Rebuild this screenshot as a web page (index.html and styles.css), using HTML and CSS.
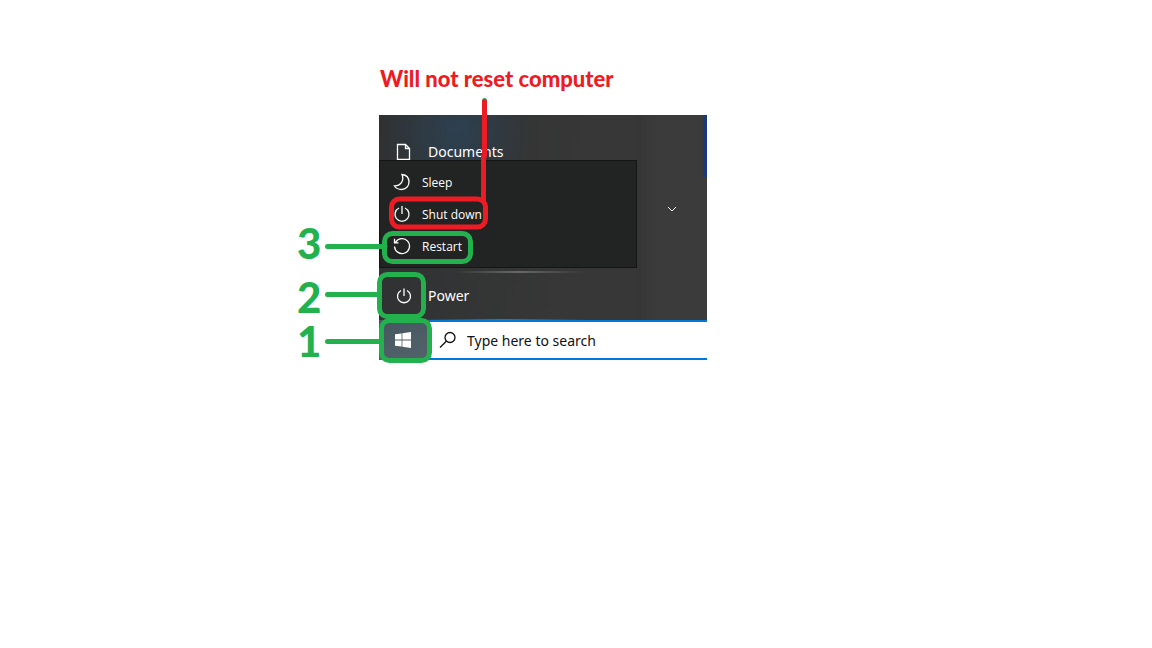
FILE: index.html
```html
<!DOCTYPE html>
<html lang="en">

<head>
    <meta charset="UTF-8">
    <meta name="viewport" content="width=device-width, initial-scale=1.0">
    <title>Restart the computer</title>
    <link rel="stylesheet" href="styles.css">
</head>

<body>
    <main class="guide">
        <h1 class="warning">Will not reset computer</h1>

        <div class="figure">
            <div class="steps">
                <div class="step step-last">3</div>
                <div class="step">2</div>
                <div class="step">1</div>
            </div>

            <div class="screen">
                <div class="start-menu">
                    <div class="menu-left">
                        <button type="button" class="nav-item documents">
                            <svg class="icon" viewBox="0 0 18 18">
                                <path d="M2.500 1.500h8l4 4v11h-12zM10.500 1.500v4h4" />
                            </svg>
                            Documents
                        </button>

                        <div class="power-menu">
                            <button type="button" class="power-option">
                                <svg class="icon" viewBox="0 0 18 18">
                                    <path d="M9 1.500C13 2 16 4.800 16 9s-3.200 7.500-7.300 7.500c-3 0-5.700-1.200-7.200-3.500C7.500 13 11.500 8 9 1.500z" />
                                </svg>
                                Sleep
                            </button>
                            <button type="button" class="power-option">
                                <svg class="icon" viewBox="0 0 18 18">
                                    <path d="M6 3a7 7 0 1 0 6 0M9 1v8" />
                                </svg>
                                Shut down
                            </button>
                            <button type="button" class="power-option">
                                <svg class="icon" viewBox="0 0 18 18">
                                    <path d="M2.500 5.300A7.500 7.500 0 1 1 1.500 9.500M1.500 1.800v4h4" />
                                </svg>
                                Restart
                            </button>
                        </div>

                        <button type="button" class="nav-item power">
                            <svg class="icon" viewBox="0 0 18 18">
                                <path d="M6 3.500a6.500 6.500 0 1 0 6 0M9 1.500v7.500" />
                            </svg>
                            Power
                        </button>
                    </div>

                    <div class="menu-right">
                        <button type="button" class="expand" aria-label="Expand">
                            <svg class="chevron" viewBox="0 0 10 6">
                                <path d="M1 1l4 4 4-4" />
                            </svg>
                        </button>
                        <div class="desktop-edge"></div>
                    </div>
                </div>

                <div class="taskbar">
                    <button type="button" class="start" aria-label="Start">
                        <svg class="logo" viewBox="0 0 16 16">
                            <path d="M0 2.300l6.600-.9v6.200H0zM7.400 1.300L16 0v7.600H7.400zM0 8.400h6.600v6.200L0 13.700zM7.400 8.400H16V16l-8.600-1.300z" />
                        </svg>
                    </button>
                    <div class="search">
                        <svg class="search-icon" viewBox="0 0 18 18">
                            <circle cx="11" cy="6.500" r="5" />
                            <path d="M7.300 10.200L1 16.500" />
                        </svg>
                        <input type="text" class="search-box" placeholder="Type here to search" aria-label="Search">
                    </div>
                </div>
            </div>
        </div>

        <!-- lines and rings that point at the buttons -->
        <svg class="marks" viewBox="0 0 410 300">
            <g class="mark-green">
                <path d="M187.500 34.500v4" />
                <path d="M30.500 180.500H88M30.500 228.500H82M30.500 275.500H84" />
                <rect x="87.500" y="167.500" width="86" height="28" rx="8" />
                <rect x="82.500" y="208.500" width="44" height="42" rx="8" />
                <rect x="84.500" y="254.500" width="48" height="40" rx="8" />
            </g>
            <g class="mark-red">
                <path d="M187.500 35.500V90M186.500 90V134" />
                <rect x="94.500" y="133" width="94" height="28" rx="8" />
            </g>
        </svg>
    </main>
</body>

</html>
```

FILE: styles.css
```css
body {
    margin: 0;
    background-color: #ffffff;
    font-family: "Noto Sans", "Open Sans", sans-serif;
}

button {
    border: none;
    padding: 0;
    background: none;
    color: #ffffff;
    font-family: inherit;
    cursor: pointer;
}

.guide {
    position: relative;
    max-width: 410px;
    margin: 65px 0 0 297px;
}

.warning {
    margin: 0;
    padding: 0 0 22px 83px;
    font-family: Lato, sans-serif;
    font-size: 22px;
    font-weight: 900;
    line-height: 28px;
    color: #ed1c24;
    white-space: nowrap;
}

.figure {
    display: flex;
    align-items: flex-start;
}

.steps {
    flex: 0 0 82px;
    padding-top: 106px;
}

.step {
    font-family: Lato, sans-serif;
    font-size: 42px;
    font-weight: 900;
    line-height: 44px;
    color: #22b14c;
}

.step-last {
    margin-bottom: 10px;
}

.screen {
    flex: 1;
}

.start-menu {
    display: flex;
    background: radial-gradient(ellipse 75px 90px at 78px 16px, #2d4050, transparent), linear-gradient(100deg, #2f3132, #373737 60%);
}

.menu-left {
    flex: 0 0 258px;
    display: flex;
    flex-direction: column;
}

.nav-item {
    display: flex;
    align-items: center;
    gap: 15px;
    padding-left: 16px;
    font-size: 14px;
    line-height: 18px;
}

.documents {
    height: 45px;
    padding-top: 29px;
}

.power {
    height: 49px;
    margin-top: 3px;
    background: linear-gradient(90deg, transparent, #686868, transparent) 75px 0 / 130px 2px no-repeat, linear-gradient(90deg, transparent, #686868, transparent) 40px 100% / 170px 1px no-repeat;
}

.icon {
    flex: none;
    width: 18px;
    height: 18px;
    fill: none;
    stroke: #ffffff;
    stroke-width: 1.3;
}

.power-menu {
    padding: 5px 0;
    border: 1px solid #151515;
    background-color: #222323;
}

.power-option {
    display: flex;
    align-items: center;
    gap: 11px;
    width: 100%;
    height: 32px;
    padding-left: 13px;
    font-family: "Open Sans", "Noto Sans", sans-serif;
    font-size: 12px;
}

.menu-right {
    flex: 1;
    display: flex;
    justify-content: space-between;
    background: linear-gradient(90deg, #353535, #3b3b3b 20px);
}

.expand {
    flex: 1;
    display: flex;
    justify-content: center;
    padding: 91px 0 0 4px;
}

.chevron {
    width: 10px;
    height: 6px;
    fill: none;
    stroke: #ffffff;
}

.desktop-edge {
    width: 4px;
    height: 62px;
    background-color: #183a78;
}

.taskbar {
    display: flex;
    height: 40px;
}

.start {
    flex: 0 0 51px;
    display: flex;
    align-items: center;
    padding-left: 16px;
    background: linear-gradient(160deg, #465761, #54636a);
}

.logo {
    width: 16px;
    height: 16px;
    fill: #ffffff;
}

.search {
    flex: 1;
    display: flex;
    align-items: center;
    gap: 10px;
    padding-left: 9px;
    border-top: 2px solid #0078d7;
    border-bottom: 2px solid #0078d7;
    background-color: #ffffff;
}

.search-icon {
    flex: none;
    width: 18px;
    height: 18px;
    fill: none;
    stroke: #111111;
    stroke-width: 1.3;
}

.search-box {
    flex: 1;
    min-width: 0;
    padding: 0;
    border: none;
    outline: none;
    font-family: inherit;
    font-size: 14px;
}

.search-box::placeholder {
    color: #111111;
}

.marks {
    position: absolute;
    top: 1px;
    left: 0;
    width: 410px;
    height: 300px;
    overflow: visible;
    fill: none;
    stroke-width: 5;
    stroke-linecap: round;
    pointer-events: none;
}

.mark-red {
    stroke: #ed1c24;
}

.mark-green {
    stroke: #22b14c;
}
```
